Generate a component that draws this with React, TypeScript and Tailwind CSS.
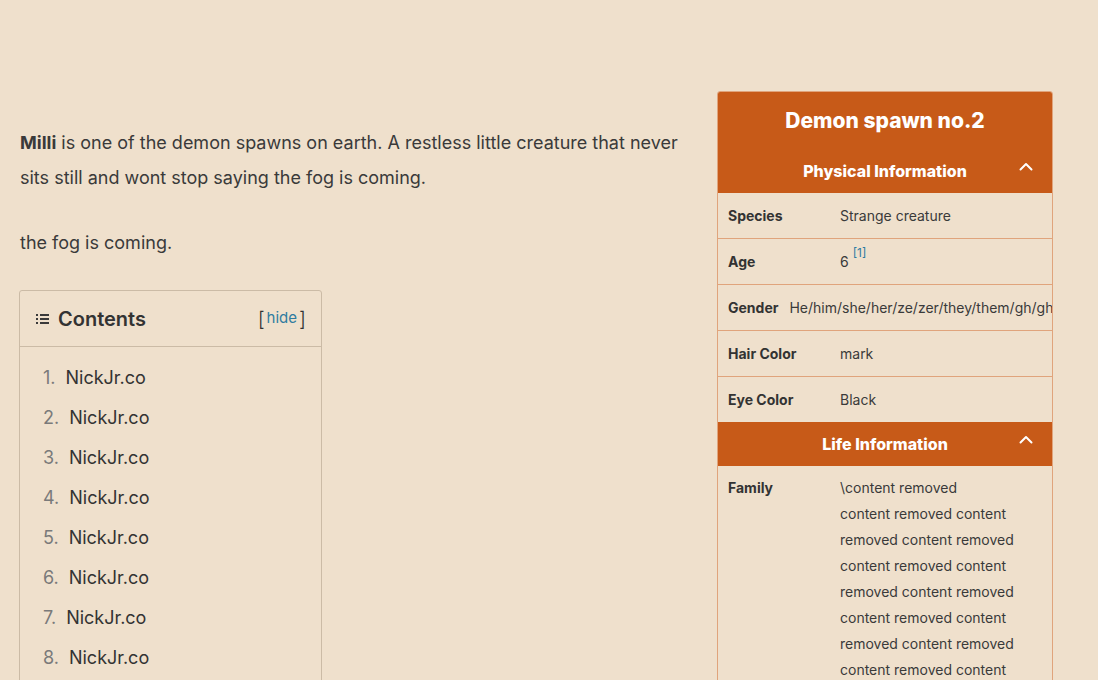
function Chevron() {
  return (
    <svg width="14" height="9" viewBox="0 0 14 9" fill="none" className="absolute right-[19px] top-1/2 -translate-y-[9px]">
      <polyline points="1.5,7.5 7,2 12.5,7.5" stroke="white" strokeWidth="2" strokeLinecap="round" strokeLinejoin="round" />
    </svg>
  )
}

function ListIcon() {
  return (
    <svg width="13" height="12" viewBox="0 0 13 12" fill="#3a3a3a">
      <rect x="0" y="1" width="2" height="2" />
      <rect x="0" y="5" width="2" height="2" />
      <rect x="0" y="9" width="2" height="2" />
      <rect x="4" y="1" width="9" height="2" />
      <rect x="4" y="5" width="9" height="2" />
      <rect x="4" y="9" width="9" height="2" />
    </svg>
  )
}

export default function App() {
  const font = { fontFamily: 'Inter, "Noto Sans", "Liberation Sans", sans-serif' }

  const rows = [
    { label: 'Species', value: <>Strange creature</> },
    { label: 'Age', value: <>6 <sup className="text-[#2d7ca3] text-[12px] align-[4px]">[1]</sup></> },
    { label: 'Gender', value: <>He/him/she/her/ze/zer/they/them/gh/gh</>, tight: true },
    { label: 'Hair Color', value: <>mark</> },
    { label: 'Eye Color', value: <>Black</> },
  ]

  const filler = 'content removed '.repeat(16)

  return (
    <div className="h-[680px] overflow-hidden bg-[#efe0cc] text-[#3a3a3a]" style={font}>
      <div className="flex gap-[20px] pl-[20px] pr-[45px] pt-[91px]">
        {/* article body */}
        <div className="flex-1 pt-[34px]">
          <p className="text-[18px] leading-[35px] max-w-[660px]">
            <b className="font-bold">Milli</b> is one of the demon spawns on earth. A restless little creature
            that never sits still and wont stop saying the fog is coming.
          </p>
          <p className="text-[18px] leading-[35px] mt-[30px]">the fog is coming.</p>

          <div className="mt-[30px] -ml-px w-[303px] border border-[#cbbba6] rounded-[3px]">
            <div className="h-[56px] flex items-center justify-between pl-[16px] pr-[15px] border-b border-[#cbbba6]">
              <div className="flex items-center gap-[9px]">
                <ListIcon />
                <span className="text-[20px] font-semibold text-[#333]">Contents</span>
              </div>
              <div className="text-[15px] flex items-center">
                <span className="text-[20px] font-light text-[#333]">[</span>
                <span className="text-[#2f7ca0] px-[2px]">hide</span>
                <span className="text-[20px] font-light text-[#333]">]</span>
              </div>
            </div>
            <ol className="pt-[11px] pl-[23px] pb-[10px]">
              {[1, 2, 3, 4, 5, 6, 7, 8].map((n) => (
                <li key={n} className="h-[40px] leading-[40px] text-[18px]">
                  <span className="text-[#7a7a7a] mr-[10px]">{n}.</span>
                  <span className="text-[#333]">NickJr.co</span>
                </li>
              ))}
            </ol>
          </div>
        </div>

        {/* infobox */}
        <aside className="w-[336px] shrink-0 border border-[#e0a47c] rounded-t-[3px] overflow-hidden self-start">
          <div className="bg-[#c75a18] text-white text-center">
            <div className="h-[57px] flex items-center justify-center text-[21px] font-extrabold pt-[1px]">
              Demon spawn no.2
            </div>
            <div className="relative h-[44px] flex items-center justify-center text-[16px] font-extrabold">
              Physical Information
              <Chevron />
            </div>
          </div>

          {rows.map((r) => (
            <div key={r.label} className="h-[46px] flex items-center border-b border-[#e0a47c] text-[14px] whitespace-nowrap">
              <div className={(r.tight ? 'pr-[11px]' : 'w-[122px]') + ' pl-[10px] font-bold text-[#333] shrink-0'}>
                {r.label}
              </div>
              <div className="text-[#3a3a3a]">{r.value}</div>
            </div>
          ))}

          <div className="relative h-[44px] -mt-px bg-[#c75a18] text-white flex items-center justify-center text-[16px] font-extrabold">
            Life Information
            <Chevron />
          </div>

          <div className="flex pt-[12px] pb-[10px] text-[14px]">
            <div className="w-[122px] pl-[10px] font-bold text-[#333] shrink-0 leading-[20px]">Family</div>
            <div className="pr-[14px] text-[#3a3a3a] leading-[26px] -mt-[3px] hyphens-auto" lang="en">
              \content removed
              <br />
              {filler}
            </div>
          </div>
        </aside>
      </div>
    </div>
  )
}
